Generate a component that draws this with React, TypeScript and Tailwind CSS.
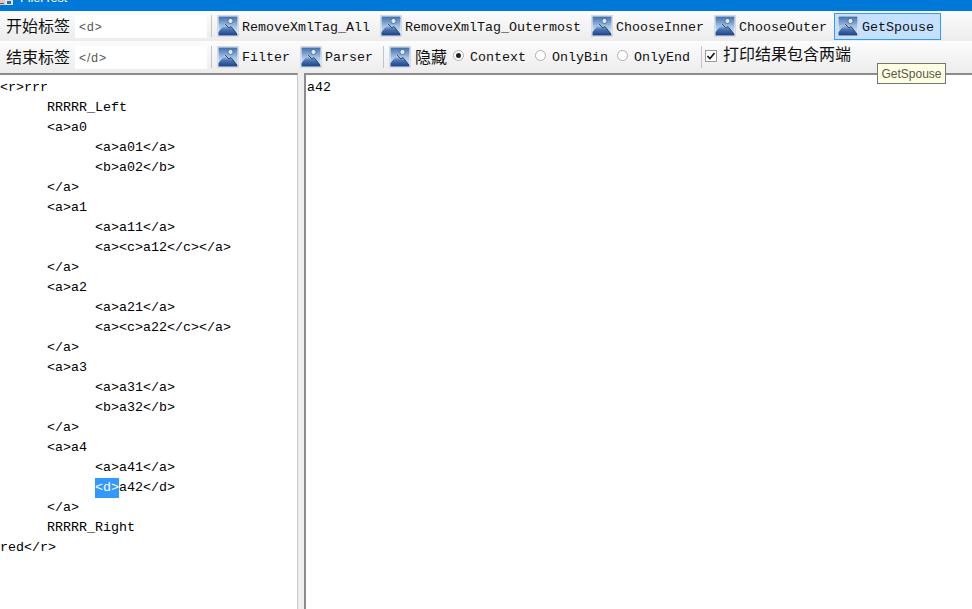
import React from "react";

const cjk = "font-['Noto_Sans_CJK_SC',sans-serif]";
const mono = "font-['Liberation_Mono',monospace]";

// the default picture icon that the toolbar buttons carry
const PicIcon = ({ id }: { id: string }): React.JSX.Element => (
  <svg width="22" height="22" viewBox="0 0 22 22" className="shrink-0">
    <defs>
      <linearGradient id={`sky${id}`} x1="0" y1="0" x2="0" y2="1">
        <stop offset="0" stopColor="#3f6fb0" />
        <stop offset="0.55" stopColor="#a9c6e6" />
        <stop offset="1" stopColor="#dfeaf6" />
      </linearGradient>
      <linearGradient id={`hill${id}`} x1="0" y1="0" x2="0" y2="1">
        <stop offset="0" stopColor="#dbe6f3" />
        <stop offset="0.45" stopColor="#4f79b6" />
        <stop offset="1" stopColor="#1c3f86" />
      </linearGradient>
    </defs>
    <rect x="0.5" y="0.5" width="21" height="21" fill="#f4f6fa" stroke="#d5dbe5" />
    <rect x="1.5" y="1.5" width="19" height="19" fill={`url(#sky${id})`} />
    <circle cx="13.5" cy="6" r="2.6" fill="#dfe9f5" stroke="#3d5f96" strokeWidth="0.8" />
    <path d="M1.5 17 L8 9 L12 13 L14 11.5 L20.5 19.5 L20.5 20.5 L1.5 20.5 Z" fill={`url(#hill${id})`} />
    <path d="M8 9 L12 13 L14 11.5 L20 19" fill="none" stroke="#1b2f55" strokeWidth="0.8" />
  </svg>
);

const ToolButton = ({
  label,
  id,
  active,
  low,
}: {
  label: string;
  id: string;
  active?: boolean;
  low?: boolean;
}): React.JSX.Element => (
  <div
    className={`flex items-center h-[27px] pl-[2px] pr-[6px] gap-[3px] border ${
      active ? "bg-[#c4e1ff] border-[#3399ff]" : "border-transparent"
    }`}
  >
    <PicIcon id={id} />
    <span className={`${mono} text-[13.33px] text-[#111] ${low ? "pt-[4px]" : "pt-[2px]"}`}>{label}</span>
  </div>
);

const Sep = (): React.JSX.Element => <div className="w-px h-[22px] bg-[#c4c4c4]" />;

const Radio = ({ label, checked }: { label: string; checked?: boolean }): React.JSX.Element => (
  <div className="flex items-center">
    <span className="flex items-center justify-center w-[11px] h-[11px] rounded-full border border-[#b0b0b0] bg-white mb-[2px]">
      {checked && <span className="w-[5px] h-[5px] rounded-full bg-[#222]" />}
    </span>
    <span className={`${mono} text-[13.33px] text-[#111] ml-[6px] pt-[2px]`}>{label}</span>
  </div>
);

const Field = ({ label, value }: { label: string; value: string }): React.JSX.Element => (
  <>
    <span className={`${cjk} text-[16px] text-[#111] w-[69px] leading-none mb-[3px]`}>{label}</span>
    <div className="flex items-center w-[132px] h-[23px] mt-[1px] bg-white pl-[4px] font-['Liberation_Sans',sans-serif] text-[12px] tracking-[1px] text-[#555]">
      {value}
    </div>
    <div className="ml-[4px] mr-[2px]">
      <Sep />
    </div>
  </>
);

const lines: { indent: number; text: string }[] = [
  { indent: 0, text: "<r>rrr" },
  { indent: 1, text: "RRRRR_Left" },
  { indent: 1, text: "<a>a0" },
  { indent: 2, text: "<a>a01</a>" },
  { indent: 2, text: "<b>a02</b>" },
  { indent: 1, text: "</a>" },
  { indent: 1, text: "<a>a1" },
  { indent: 2, text: "<a>a11</a>" },
  { indent: 2, text: "<a><c>a12</c></a>" },
  { indent: 1, text: "</a>" },
  { indent: 1, text: "<a>a2" },
  { indent: 2, text: "<a>a21</a>" },
  { indent: 2, text: "<a><c>a22</c></a>" },
  { indent: 1, text: "</a>" },
  { indent: 1, text: "<a>a3" },
  { indent: 2, text: "<a>a31</a>" },
  { indent: 2, text: "<b>a32</b>" },
  { indent: 1, text: "</a>" },
  { indent: 1, text: "<a>a4" },
  { indent: 2, text: "<a>a41</a>" },
  { indent: 2, text: "SEL" },
  { indent: 1, text: "</a>" },
  { indent: 1, text: "RRRRR_Right" },
  { indent: 0, text: "red</r>" },
];

const App = (): React.JSX.Element => {
  return (
    <div className="relative flex flex-col w-[972px] h-[609px] overflow-hidden bg-white">
      {/* title bar, cut off by the top of the picture */}
      <div className="flex items-start h-[11px] bg-[#0078d7] overflow-hidden shrink-0">
        <svg width="13" height="5" viewBox="0 0 13 5" className="shrink-0">
          <rect x="0" y="0" width="5" height="5" fill="#d8c8c8" />
          <rect x="0" y="3" width="4" height="1" fill="#a83c3c" />
          <rect x="5" y="0" width="8" height="5" fill="#dfe6ef" />
          <rect x="7" y="1" width="4" height="3" fill="#2f66b0" />
        </svg>
        <span className="font-['Liberation_Sans',sans-serif] text-[12.5px] leading-[14px] text-white ml-[7px] mt-[-9px]">
          FilerTest
        </span>
      </div>

      {/* first toolbar */}
      <div className="flex items-center h-[30px] pl-[6px] shrink-0 bg-gradient-to-b from-[#fcfcfc] to-[#ececec]">
        <Field label="开始标签" value="<d>" />
        <ToolButton id="a" label="RemoveXmlTag_All" low />
        <ToolButton id="b" label="RemoveXmlTag_Outermost" low />
        <ToolButton id="c" label="ChooseInner" low />
        <ToolButton id="d" label="ChooseOuter" low />
        <ToolButton id="e" label="GetSpouse" active low />
      </div>

      {/* second toolbar */}
      <div className="flex items-center h-[32px] pl-[6px] shrink-0 bg-gradient-to-b from-[#fcfcfc] to-[#ececec]">
        <Field label="结束标签" value="</d>" />
        <ToolButton id="f" label="Filter" />
        <ToolButton id="g" label="Parser" />
        <div className="mr-[5px] ml-[3px]">
          <Sep />
        </div>
        <PicIcon id="h" />
        <span className={`${cjk} text-[16px] text-[#111] leading-none ml-[4px] mr-[6px] mb-[3px]`}>隐藏</span>
        <div className="flex items-center gap-[9px]">
          <Radio label="Context" checked />
          <Radio label="OnlyBin" />
          <Radio label="OnlyEnd" />
        </div>
        <div className="ml-[11px] mr-[3px]">
          <Sep />
        </div>
        <span className="flex items-center justify-center w-[12px] h-[12px] mb-[2px] border border-[#9a9a9a] bg-white">
          <svg width="10" height="10" viewBox="0 0 10 10">
            <path d="M1.5 5 L4 7.5 L8.5 2" fill="none" stroke="#111" strokeWidth="1.6" />
          </svg>
        </span>
        <span className={`${cjk} text-[16px] text-[#111] leading-none ml-[6px] mb-[8px]`}>
          打印结果包含两端
        </span>
      </div>

      {/* text panes */}
      <div className="flex flex-1 min-h-0 bg-[#f0f0f0]">
        <div className={`w-[298px] shrink-0 pt-[3px] bg-white border-t-2 border-t-[#8c8c8c] border-r border-r-[#c8c8c8] ${mono} text-[13.33px] leading-[20px] text-black whitespace-pre`}>
          {lines.map((line, i) => (
            <div key={i} className={line.indent === 1 ? "pl-[47px]" : line.indent === 2 ? "pl-[95px]" : ""}>
              {line.text === "SEL" ? (
                <>
                  <span className="inline-block bg-[#3399ff] text-white">{"<d>"}</span>
                  {"a42</d>"}
                </>
              ) : (
                line.text
              )}
            </div>
          ))}
        </div>
        <div className={`flex-1 ml-[6px] bg-white border-t-2 border-l-2 border-[#8c8c8c] pl-[1px] pt-[3px] ${mono} text-[13.33px] leading-[20px] text-black`}>
          a42
        </div>
      </div>

      {/* hover tooltip */}
      <div className="absolute left-[877px] top-[63px] w-[69px] h-[21px] flex items-center justify-center bg-[#ffffe1] border border-[#767676] font-['Liberation_Sans',sans-serif] text-[12px] text-[#575757]">
        GetSpouse
      </div>
    </div>
  );
};

export default App;
